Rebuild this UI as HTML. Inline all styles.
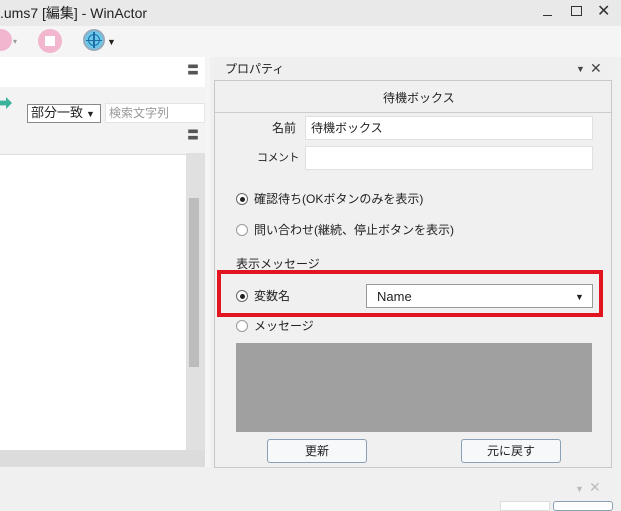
<!DOCTYPE html><html><head><meta charset="utf-8"><style>
body{margin:0;width:621px;height:505px;overflow:hidden;background:#f0f0f0;font-family:"Liberation Sans","Noto Sans CJK JP",sans-serif;font-size:12px;color:#222;position:relative}
div,span{position:absolute;box-sizing:border-box}
.t{white-space:nowrap;line-height:16px}
.in{background:#fff;border:1px solid #d6d6d6}
.rad{width:12px;height:12px;border:1px solid #666;border-radius:50%;background:#fff}
.rad.on::after{content:"";position:absolute;left:2.5px;top:2.5px;width:5px;height:5px;border-radius:50%;background:#222}
.btn{background:#f6f8fa;border:1px solid #8aa0b5;border-radius:3px;text-align:center;line-height:22px}
</style></head><body>
<div style="left:0;top:0;width:621px;height:26px;background:#e9e9e9"></div>
<div class="t" style="left:0;top:5px;font-size:14px;color:#222">.ums7 [編集] - WinActor</div>
<div style="left:543px;top:15px;width:9px;height:1px;background:#333"></div>
<div style="left:571px;top:6px;width:11px;height:10px;border:1px solid #333"></div>
<div class="t" style="left:597px;top:4px;font-size:16px;color:#333">✕</div>
<div style="left:0;top:26px;width:621px;height:31px;background:#f5f5f5"></div>
<div style="left:-10px;top:29px;width:22px;height:22px;border-radius:50%;background:#f2b6cf"></div>
<div class="t" style="left:13px;top:34px;font-size:8px;color:#999">▾</div>
<div style="left:38px;top:29px;width:24px;height:24px;border-radius:50%;background:#f2b6cf"></div>
<div style="left:45px;top:36px;width:10px;height:10px;background:#fff"></div>
<div style="left:83px;top:29px;width:22px;height:22px;border-radius:50%;background:#6cc7ea;border:2px solid #9ab"></div>
<div style="left:88px;top:34px;width:12px;height:12px;border-radius:50%;border:1.5px solid #1c6ea4"></div>
<div style="left:93px;top:32px;width:1.5px;height:16px;background:#1c6ea4"></div>
<div style="left:86px;top:39.5px;width:16px;height:1.5px;background:#1c6ea4"></div>
<div class="t" style="left:107px;top:34px;font-size:9px">▼</div>
<div style="left:0;top:57px;width:205px;height:30px;background:#fff"></div>
<div class="t" style="left:187px;top:62px;font-size:12px;color:#555">〓</div>
<div style="left:0;top:87px;width:205px;height:67px;background:#f3f3f3"></div>
<div style="left:0;top:97px;width:12px;height:12px;background:#3bb39a;clip-path:polygon(0 30%,50% 30%,50% 0,100% 50%,50% 100%,50% 70%,0 70%)"></div>
<div class="in" style="left:27px;top:104px;width:74px;height:19px;border-color:#888"></div>
<div class="t" style="left:31px;top:105px;font-size:13px">部分一致</div>
<div class="t" style="left:86px;top:106px;font-size:9px">▼</div>
<div class="in" style="left:105px;top:103px;width:100px;height:20px;border-color:#e4e4e4"></div>
<div class="t" style="left:109px;top:105px;font-size:12px;color:#999">検索文字列</div>
<div class="t" style="left:187px;top:127px;font-size:12px;color:#555">〓</div>
<div style="left:0;top:154px;width:186px;height:296px;background:#fff;border-top:1px solid #ddd"></div>
<div style="left:186px;top:153px;width:19px;height:297px;background:#e0e0e0"></div>
<div style="left:189px;top:198px;width:10px;height:169px;background:#bcbcbc"></div>
<div style="left:0;top:450px;width:205px;height:17px;background:#dcdcdc"></div>
<div style="left:205px;top:57px;width:5px;height:410px;background:#f5f5f5"></div>
<div style="left:214px;top:57px;width:396px;height:23px;background:#efefef"></div>
<div class="t" style="left:225px;top:61px;font-size:12px">プロパティ</div>
<div class="t" style="left:576px;top:61px;font-size:9px;color:#444">▼</div>
<div class="t" style="left:590px;top:60px;font-size:14px;color:#444">✕</div>
<div style="left:214px;top:80px;width:398px;height:388px;border:1px solid #c8c8c8;background:#f0f0f0"></div>
<div style="left:215px;top:81px;width:396px;height:32px;border-bottom:1px solid #ccc"></div>
<div class="t" style="left:383px;top:90px;font-size:12px">待機ボックス</div>
<div class="t" style="left:272px;top:120px;font-size:12px">名前</div>
<div class="in" style="left:305px;top:116px;width:288px;height:24px;border-color:#e0e0e0"></div>
<div class="t" style="left:311px;top:120px;font-size:12px">待機ボックス</div>
<div class="t" style="left:257px;top:150px;font-size:11px;letter-spacing:-0.5px">コメント</div>
<div class="in" style="left:305px;top:146px;width:288px;height:24px;border-color:#e0e0e0"></div>
<div class="rad on" style="left:236px;top:193px"></div>
<div class="t" style="left:254px;top:191px">確認待ち(OKボタンのみを表示)</div>
<div class="rad" style="left:236px;top:224px;border-color:#999"></div>
<div class="t" style="left:254px;top:222px">問い合わせ(継続、停止ボタンを表示)</div>
<div class="t" style="left:236px;top:256px">表示メッセージ</div>
<div style="left:217px;top:270px;width:386px;height:47px;border:4px solid #e2141f"></div>
<div class="rad on" style="left:236px;top:290px"></div>
<div class="t" style="left:254px;top:288px">変数名</div>
<div class="in" style="left:366px;top:284px;width:227px;height:24px;border-color:#999"></div>
<div class="t" style="left:377px;top:289px;font-size:13px">Name</div>
<div class="t" style="left:575px;top:289px;font-size:9px">▼</div>
<div class="rad" style="left:236px;top:320px;border-color:#999"></div>
<div class="t" style="left:254px;top:318px">メッセージ</div>
<div style="left:236px;top:343px;width:356px;height:89px;background:#a0a0a0"></div>
<div class="btn" style="left:267px;top:439px;width:100px;height:24px">更新</div>
<div class="btn" style="left:461px;top:439px;width:100px;height:24px">元に戻す</div>
<div class="t" style="left:575px;top:481px;font-size:9px;color:#bbb">▼</div>
<div class="t" style="left:589px;top:479px;font-size:14px;color:#bbb">✕</div>
<div style="left:500px;top:501px;width:50px;height:10px;background:#fff;border:1px solid #ddd"></div>
<div style="left:553px;top:501px;width:60px;height:10px;background:#fff;border:1px solid #8aa0b5;border-radius:3px"></div>
</body></html>
